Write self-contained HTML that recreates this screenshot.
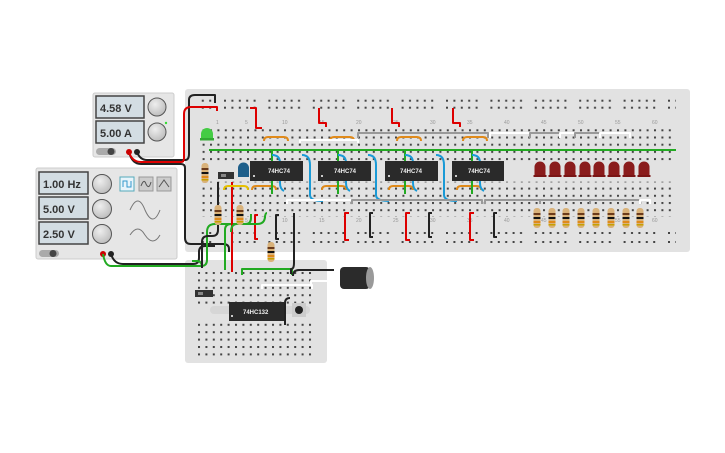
<!DOCTYPE html>
<html><head><meta charset="utf-8"><style>
html,body{margin:0;padding:0;background:#fff;width:725px;height:453px;overflow:hidden}
svg{display:block}
text{font-family:"Liberation Sans",sans-serif}
</style></head><body>
<svg width="725" height="453" viewBox="0 0 725 453" xmlns="http://www.w3.org/2000/svg">
<defs>
<pattern id="h" x="202.6" y="129.3" width="7.4" height="7.2" patternUnits="userSpaceOnUse"><rect x="0" y="0" width="2" height="2" fill="#444"/></pattern>
<pattern id="r" x="224" y="99.7" width="44.4" height="7" patternUnits="userSpaceOnUse">
<rect x="0" width="2" height="2" fill="#444"/><rect x="7.4" width="2" height="2" fill="#444"/><rect x="14.8" width="2" height="2" fill="#444"/><rect x="22.2" width="2" height="2" fill="#444"/><rect x="29.6" width="2" height="2" fill="#444"/></pattern>
<pattern id="r2" x="224" y="232" width="44.4" height="9" patternUnits="userSpaceOnUse">
<rect x="0" width="2" height="2" fill="#444"/><rect x="7.4" width="2" height="2" fill="#444"/><rect x="14.8" width="2" height="2" fill="#444"/><rect x="22.2" width="2" height="2" fill="#444"/><rect x="29.6" width="2" height="2" fill="#444"/></pattern>
<pattern id="hs" x="198" y="272" width="7.4" height="7.4" patternUnits="userSpaceOnUse"><rect width="2" height="2" fill="#444"/></pattern>
<g id="res"><rect x="-3.5" y="0" width="7" height="20" rx="3" fill="#d9b27a"/><rect x="-3.5" y="5" width="7" height="2" fill="#6b3a1a"/><rect x="-3.5" y="9" width="7" height="2" fill="#111"/><rect x="-3.5" y="13" width="7" height="2" fill="#e08a1a"/><rect x="-3.5" y="16" width="7" height="1.5" fill="#c8a000"/></g>
<g id="led"><path d="M-5.5 12 V3 a5.5 5.5 0 0 1 11 0 V12 Z" fill="#8a1c1c"/><rect x="-6.5" y="11" width="13" height="2" fill="#7a1515"/></g>
<radialGradient id="kn" cx="0.4" cy="0.35" r="0.7"><stop offset="0" stop-color="#eee"/><stop offset="1" stop-color="#bbb"/></radialGradient>
</defs>

<rect x="185" y="89" width="505" height="163" rx="3" fill="#e2e2e2"/>
<rect x="200" y="99" width="476" height="11" fill="url(#r)"/>
<rect x="202" y="129" width="474" height="35" fill="url(#h)"/>
<rect x="202" y="181" width="474" height="35" fill="url(#h)" transform="translate(0,0.7)"/>
<rect x="200" y="232" width="476" height="12" fill="url(#r2)"/>
<g font-size="5" fill="#999">
<text x="216" y="124">1</text><text x="245" y="124">5</text><text x="282" y="124">10</text><text x="319" y="124">15</text><text x="356" y="124">20</text><text x="393" y="124">25</text><text x="430" y="124">30</text><text x="467" y="124">35</text><text x="504" y="124">40</text><text x="541" y="124">45</text><text x="578" y="124">50</text><text x="615" y="124">55</text><text x="652" y="124">60</text>
<text x="245" y="222">5</text><text x="282" y="222">10</text><text x="319" y="222">15</text><text x="356" y="222">20</text><text x="393" y="222">25</text><text x="430" y="222">30</text><text x="467" y="222">35</text><text x="504" y="222">40</text><text x="541" y="222">45</text><text x="578" y="222">50</text><text x="615" y="222">55</text><text x="652" y="222">60</text>
</g>

<rect x="185" y="260" width="142" height="103" rx="3" fill="#e2e2e2"/>
<rect x="196" y="270" width="120" height="38" fill="url(#hs)"/>
<rect x="196" y="322" width="120" height="38" fill="url(#hs)"/>
<rect x="210" y="306" width="100" height="8" rx="4" fill="#d6d6d6"/>

<rect x="93" y="93" width="81" height="64" rx="2" fill="#e6e6e6" stroke="#ccc"/>
<rect x="96" y="96" width="48" height="22" fill="#d3dde3" stroke="#444" stroke-width="1.5"/>
<text x="100" y="112" font-size="11" font-weight="bold" fill="#333">4.58 V</text>
<rect x="96" y="121" width="48" height="22" fill="#d3dde3" stroke="#444" stroke-width="1.5"/>
<text x="100" y="137" font-size="11" font-weight="bold" fill="#333">5.00 A</text>
<circle cx="157" cy="107" r="9" fill="url(#kn)" stroke="#555"/><circle cx="157" cy="132" r="9" fill="url(#kn)" stroke="#555"/>
<circle cx="166" cy="123" r="1.2" fill="#3d3"/>
<rect x="96" y="148" width="20" height="7" rx="3.5" fill="#aaa"/><circle cx="111" cy="151.5" r="3.5" fill="#444"/>
<circle cx="129" cy="152" r="3" fill="#c00"/><circle cx="137" cy="152" r="3" fill="#222"/>

<rect x="36" y="168" width="141" height="91" rx="2" fill="#e6e6e6" stroke="#ccc"/>
<rect x="39" y="172" width="49" height="22" fill="#d3dde3" stroke="#444" stroke-width="1.5"/>
<text x="43" y="188" font-size="11" font-weight="bold" fill="#333">1.00 Hz</text>
<rect x="39" y="197" width="49" height="22" fill="#d3dde3" stroke="#444" stroke-width="1.5"/>
<text x="43" y="213" font-size="11" font-weight="bold" fill="#333">5.00 V</text>
<rect x="39" y="222" width="49" height="22" fill="#d3dde3" stroke="#444" stroke-width="1.5"/>
<text x="43" y="238" font-size="11" font-weight="bold" fill="#333">2.50 V</text>
<circle cx="102" cy="184" r="9.5" fill="url(#kn)" stroke="#555"/><circle cx="102" cy="209" r="9.5" fill="url(#kn)" stroke="#555"/><circle cx="102" cy="234" r="9.5" fill="url(#kn)" stroke="#555"/>
<rect x="120" y="177" width="14" height="14" fill="#e8f4fb" stroke="#5ab" /><path d="M123 187 v-6 h4 v6 h4 v-6" fill="none" stroke="#39c" stroke-width="1"/>
<rect x="139" y="177" width="14" height="14" fill="#ccc" stroke="#999"/><path d="M141 186 q3 -8 5 -2 q3 6 5 -2" fill="none" stroke="#555"/>
<rect x="157" y="177" width="14" height="14" fill="#ccc" stroke="#999"/><path d="M159 187 l5 -7 l5 7" fill="none" stroke="#555"/>
<path d="M130 210 q8 -18 15 0 q8 18 15 0" fill="none" stroke="#777"/><path d="M130 235 q8 -12 15 0 q8 12 15 0" fill="none" stroke="#777"/>
<rect x="39" y="250" width="20" height="7" rx="3.5" fill="#aaa"/><circle cx="53" cy="253.5" r="3.5" fill="#444"/>
<circle cx="103" cy="254" r="3" fill="#c00"/><circle cx="111" cy="254" r="3" fill="#222"/>

<g fill="none" stroke-width="2" stroke-linejoin="round">
<path d="M137 152 q3 8 10 8 h38 q4 0 4 -6 V100 q0 -5 6 -5 h20 v8" stroke="#222"/>
<path d="M129 152 q3 12 12 12 h40 q4 0 4 4 V238 q0 6 6 6 h32 q6 0 6 5 v3" stroke="#222"/>
<path d="M129 152 q3 10 12 10 h40 q3 0 3 -4 V114 q0 -7 7 -7 h26 v4" stroke="#d00"/>
<path d="M111 254 q3 10 12 10 h70 q6 0 6 -6 V252 q0 -6 6 -6 h10" stroke="#222"/>
<path d="M103 254 q2 12 8 12 h90 q6 0 6 -6 v-28 q0 -8 8 -8 h30 q6 0 6 -6 v-4" stroke="#2a2"/>
<path d="M202 268 q0 -7 -5 -7 h-5" stroke="#2a2"/>
<path d="M218 182 v48 q0 6 -6 6 h-4 q-6 0 -6 6 v26" stroke="#222"/>
<path d="M232 182 v90" stroke="#d00"/>
<path d="M225 270 v-40 q0 -6 6 -6 h0" stroke="#2a2"/>
<path d="M242 275 v-6 h50 v6" stroke="#2a2"/>
<path d="M250 108 h6 v20 h6" stroke="#d00"/>
<path d="M319 108 v15 h7 v4" stroke="#d00"/><path d="M392 108 v15 h7 v4" stroke="#d00"/><path d="M453 108 v15 h7 v4" stroke="#d00"/>
<path d="M209 150 h467" stroke="#2a2"/>
<path d="M264 141 q0 -4 4 -4 h16 q4 0 4 4" stroke="#e08a1a"/><path d="M330 141 q0 -4 4 -4 h16 q4 0 4 4" stroke="#e08a1a"/><path d="M397 141 q0 -4 4 -4 h16 q4 0 4 4" stroke="#e08a1a"/><path d="M463 141 q0 -4 4 -4 h16 q4 0 4 4" stroke="#e08a1a"/>
<path d="M252 190 q0 -4 4 -4 h16 q4 0 4 4" stroke="#e08a1a"/><path d="M322 190 q0 -4 4 -4 h16 q4 0 4 4" stroke="#e08a1a"/><path d="M389 190 q0 -4 4 -4 h16 q4 0 4 4" stroke="#e08a1a"/><path d="M457 190 q0 -4 4 -4 h16 q4 0 4 4" stroke="#e08a1a"/>
<path d="M224 190 q0 -4 4 -4 h16 q4 0 4 4" stroke="#e6c000"/>
<path d="M272 150 v12 M272 180 v14" stroke="#2a2"/><path d="M338 150 v12 M338 180 v14" stroke="#2a2"/><path d="M405 150 v12 M405 180 v14" stroke="#2a2"/><path d="M472 150 v12 M472 180 v14" stroke="#2a2"/>
<path d="M272 155 q8 0 8 8 v20 q0 6 4 8" stroke="#1a9ad6"/><path d="M302 155 q8 0 8 10 v30 q0 6 13 6" stroke="#1a9ad6"/>
<path d="M338 155 q8 0 8 8 v20 q0 6 4 8" stroke="#1a9ad6"/><path d="M368 155 q8 0 8 10 v30 q0 6 13 6" stroke="#1a9ad6"/>
<path d="M405 155 q8 0 8 8 v20 q0 6 4 8" stroke="#1a9ad6"/><path d="M436 155 q8 0 8 10 v30 q0 6 13 6" stroke="#1a9ad6"/>
<path d="M472 155 q8 0 8 8 v20 q0 6 4 8" stroke="#1a9ad6"/>
<path d="M300 143 v-3 h58 v3" stroke="#fff"/><path d="M358 138 v-5 h130 v5" stroke="#999"/><path d="M490 138 v-5 h40 v5" stroke="#fff"/><path d="M530 138 v-5 h30 v5" stroke="#999"/><path d="M560 138 v-5 h40 v5" stroke="#fff"/><path d="M575 138 v-5 h25 v5" stroke="#999"/><path d="M600 138 v-5 h30 v5" stroke="#fff"/>
<path d="M287 204 v-4 h65 v4" stroke="#fff"/><path d="M352 204 v-4 h130 v4" stroke="#999"/><path d="M485 204 v-4 h55 v4" stroke="#999"/><path d="M540 204 v-4 h50 v4" stroke="#999"/><path d="M590 204 v-4 h50 v4" stroke="#999"/><path d="M640 204 v-4 h10 v4" stroke="#fff"/>
<path d="M258 215 h-3 v24 h3" stroke="#d00"/><path d="M279 215 h-3 v24 h3" stroke="#222"/>
<path d="M349 213 h-4 v27 h4" stroke="#d00"/><path d="M373 213 h-3 v24 h3" stroke="#222"/>
<path d="M410 213 h-4 v27 h4" stroke="#d00"/><path d="M432 213 h-3 v24 h3" stroke="#222"/>
<path d="M474 213 h-4 v27 h4" stroke="#d00"/><path d="M497 213 h-3 v24 h3" stroke="#222"/>
<path d="M267 213 q-2 0 -2 5 v-2 q0 8 -8 8 h-20 q-6 0 -6 8" stroke="#2a2"/>
<path d="M294 213 v50 q0 6 -3 6 v5" stroke="#222"/>
<path d="M293 276 q0 -6 6 -6 h35" stroke="#222"/>
<path d="M290 298 q-5 0 -5 5 v22" stroke="#222"/>
<path d="M262 289 v-4 h50 v4" stroke="#fff"/><path d="M311 286 v-5 h24" stroke="#fff"/>
</g>

<g><path d="M201 134 a6 6 0 0 1 12 0 v5 h-12 Z" fill="#4c4"/><rect x="200" y="138" width="14" height="2.5" fill="#3a3"/></g>
<use href="#res" x="205" y="163"/>
<use href="#res" x="218" y="205"/><use href="#res" x="240" y="205"/><use href="#res" x="271" y="242"/>
<rect x="218" y="172" width="16" height="7" fill="#333"/><rect x="221" y="174" width="5" height="3" fill="#888"/>
<path d="M238 177 v-9 a5.5 5.5 0 0 1 11 0 v9 Z" fill="#1e5f8a"/>
<g font-size="6" fill="#eee" font-weight="bold">
<rect x="250" y="161" width="53" height="20" fill="#2a2a2a"/><text x="268" y="173">74HC74</text><circle cx="254" cy="176" r="1" fill="#fff"/>
<rect x="318" y="161" width="53" height="20" fill="#2a2a2a"/><text x="334" y="173">74HC74</text><circle cx="322" cy="176" r="1" fill="#fff"/>
<rect x="385" y="161" width="53" height="20" fill="#2a2a2a"/><text x="400" y="173">74HC74</text><circle cx="389" cy="176" r="1" fill="#fff"/>
<rect x="452" y="161" width="52" height="20" fill="#2a2a2a"/><text x="468" y="173">74HC74</text><circle cx="456" cy="176" r="1" fill="#fff"/>
<rect x="229" y="302" width="55" height="19" fill="#2a2a2a"/><text x="243" y="314">74HC132</text><circle cx="232" cy="316" r="1" fill="#fff"/>
</g>
<use href="#led" x="540" y="164"/><use href="#led" x="555" y="164"/><use href="#led" x="570" y="164"/><use href="#led" x="585" y="164"/><use href="#led" x="599" y="164"/><use href="#led" x="614" y="164"/><use href="#led" x="629" y="164"/><use href="#led" x="644" y="164"/>
<use href="#res" x="537" y="208"/><use href="#res" x="552" y="208"/><use href="#res" x="566" y="208"/><use href="#res" x="581" y="208"/><use href="#res" x="596" y="208"/><use href="#res" x="611" y="208"/><use href="#res" x="626" y="208"/><use href="#res" x="640" y="208"/>
<rect x="195" y="290" width="18" height="7" fill="#333"/><rect x="198" y="292" width="5" height="3" fill="#888"/>
<rect x="292" y="303" width="14" height="14" fill="#ccc"/><circle cx="299" cy="310" r="4" fill="#222"/>
<rect x="340" y="267" width="30" height="22" rx="4" fill="#2b2b2b"/><ellipse cx="370" cy="278" rx="4" ry="11" fill="#9a9a9a"/>
</svg>
</body></html>
